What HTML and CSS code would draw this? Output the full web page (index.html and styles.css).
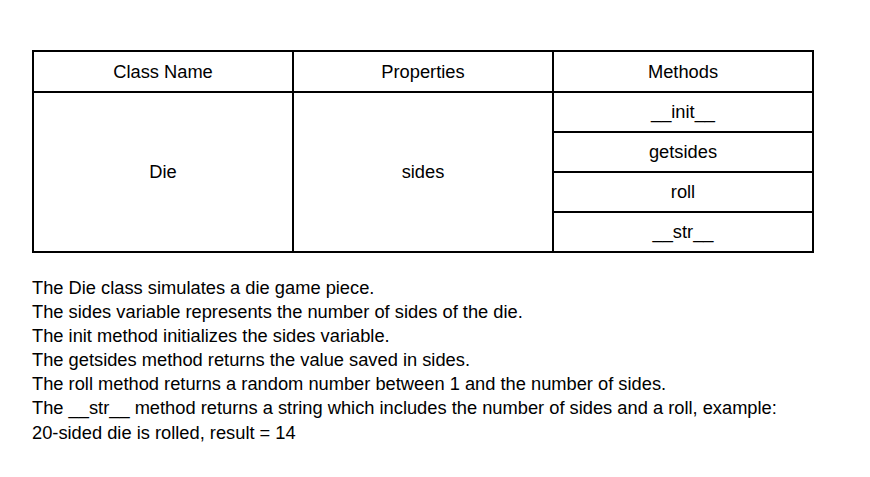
FILE: index.html
```html
<!DOCTYPE html>
<html>
<head>
<meta charset="utf-8">
<link rel="stylesheet" href="styles.css">
</head>
<body>
<div class="page">
  <div class="uml">
    <div class="cell head">Class Name</div>
    <div class="cell head">Properties</div>
    <div class="cell head">Methods</div>
    <div class="cell span">Die</div>
    <div class="cell span">sides</div>
    <div class="methods">
      <div class="cell method">__init__</div>
      <div class="cell method">getsides</div>
      <div class="cell method">roll</div>
      <div class="cell method">__str__</div>
    </div>
  </div>
  <div class="notes">
    <p>The Die class simulates a die game piece.</p>
    <p>The sides variable represents the number of sides of the die.</p>
    <p>The init method initializes the sides variable.</p>
    <p>The getsides method returns the value saved in sides.</p>
    <p>The roll method returns a random number between 1 and the number of sides.</p>
    <p>The __str__ method returns a string which includes the number of sides and a roll, example:</p>
    <p class="last">20-sided die is rolled, result = 14</p>
  </div>
</div>
</body>
</html>
```

FILE: styles.css
```css
html, body {
  margin: 0;
  padding: 0;
  background: #ffffff;
}

body {
  font-family: "Liberation Sans", Arial, sans-serif;
  font-size: 18.3px;
  color: #000000;
}

.page {
  padding: 50px 0 0 32px;
}

.uml {
  width: 782px;
  box-sizing: border-box;
  border-top: 2px solid #000;
  border-left: 2px solid #000;
  display: grid;
  grid-template-columns: repeat(3, 1fr);
  grid-template-rows: 41px 160px;
}

.cell {
  box-sizing: border-box;
  border-right: 2px solid #000;
  border-bottom: 2px solid #000;
  display: flex;
  align-items: center;
  justify-content: center;
  line-height: 20px;
}

.head {
  padding-top: 1px;
}

.methods {
  display: grid;
  grid-template-rows: repeat(4, 40px);
}

.notes {
  margin-top: 23px;
  line-height: 24px;
}

.notes p {
  margin: 0;
}

.notes .last {
  margin-top: 1px;
}
```
